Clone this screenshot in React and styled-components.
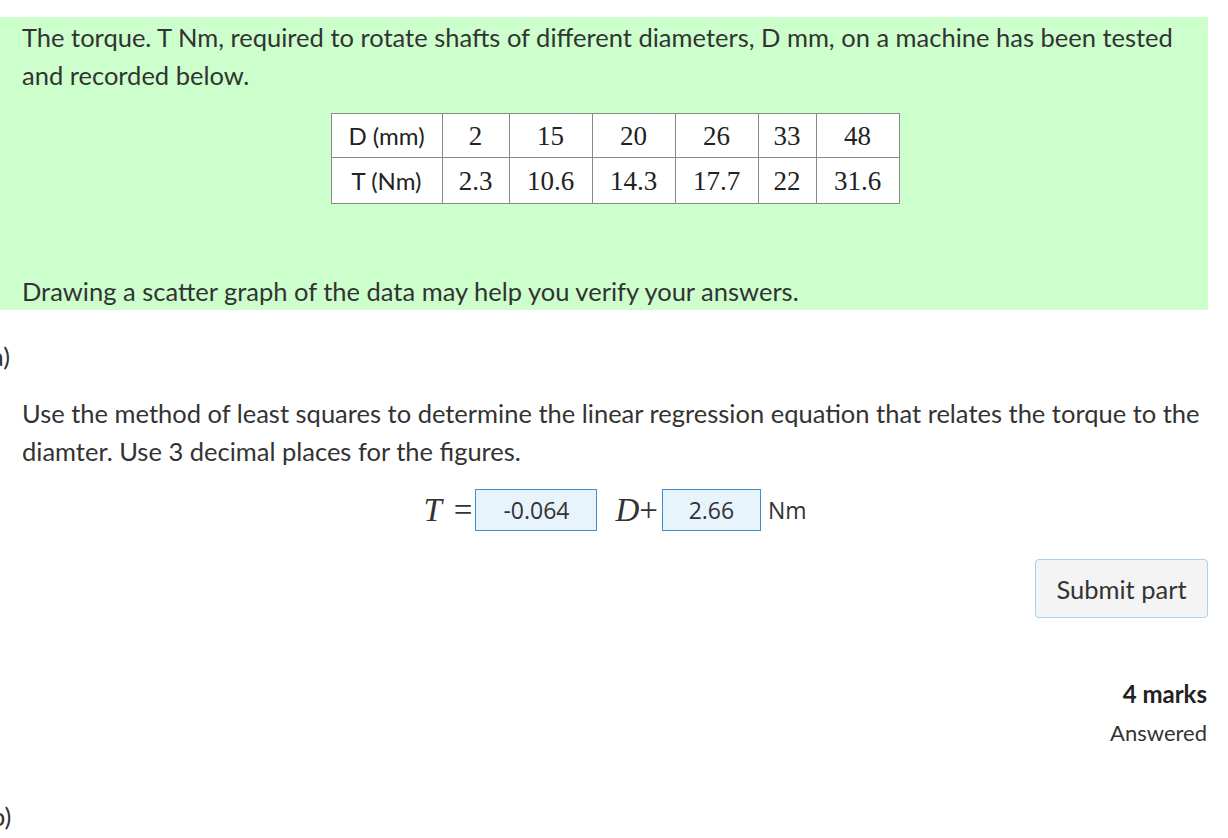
import React from 'react';
import styled, { createGlobalStyle } from 'styled-components';

const GlobalStyle = createGlobalStyle`
  body {
    margin: 0;
    background: #fff;
    color: #333;
    font-family: Lato, "Noto Sans", sans-serif;
    overflow: hidden;
  }
`;

const Page = styled.div`
  padding: 17px 20px 0 0;
  font-size: 25.5px;
  line-height: 38px;
`;

const Prompt = styled.div`
  background: #ccffcc;
  padding: 0 0 0 22px;
`;

const Para = styled.p`
  margin: 0;
  padding-top: ${(p) => p.$top || 0}px;
`;

const DataTable = styled.table`
  border-collapse: collapse;
  margin: 19px auto 68px;
  background: #fff;
`;

const Cell = styled.td`
  border: 1px solid #888;
  text-align: center;
  padding: 0;
  width: ${(p) => p.$w}px;
  height: ${(p) => p.$h}px;
  font-family: ${(p) => (p.$head ? 'Lato, "Noto Sans", sans-serif' : '"Liberation Serif", "DejaVu Serif", serif')};
  font-size: ${(p) => (p.$head ? 24 : 27)}px;
  color: #222;
`;

const Part = styled.div`
  margin-top: 27px;
`;

const PartLabel = styled.div`
  margin-left: -9px;
  height: 38px;
`;

const PartBody = styled.div`
  padding: 19px 0 0 22px;
`;

const Equation = styled.div`
  display: flex;
  justify-content: center;
  align-items: center;
  margin-top: 19px;
  height: 42px;
`;

const MathVar = styled.span`
  font-family: "Liberation Serif", "DejaVu Serif", serif;
  font-style: italic;
  font-size: 33px;
  margin: ${(p) => p.$m || '0'};
`;

const MathOp = styled.span`
  font-family: "Liberation Serif", "DejaVu Serif", serif;
  font-size: 33px;
  margin: ${(p) => p.$m || '0'};
`;

const AnswerBox = styled.span`
  box-sizing: border-box;
  display: inline-flex;
  align-items: center;
  justify-content: center;
  width: ${(p) => p.$w}px;
  height: 42px;
  background: #e8f4fc;
  border: 1px solid #3d8fd1;
  font-family: "Open Sans", "Noto Sans", sans-serif;
  font-size: 23px;
  color: #333;
`;

const Unit = styled.span`
  font-family: "Open Sans", "Noto Sans", sans-serif;
  font-size: 23px;
  margin-left: 7px;
`;

const Actions = styled.div`
  display: flex;
  justify-content: flex-end;
  margin-top: 28px;
`;

const SubmitButton = styled.button`
  box-sizing: border-box;
  width: 173px;
  height: 59px;
  background: #f4f4f4;
  border: 1px solid #a9d0ec;
  border-radius: 4px;
  font-family: Lato, "Noto Sans", sans-serif;
  font-size: 25.5px;
  color: #333;
`;

const Marks = styled.div`
  text-align: right;
  margin-top: 56px;
  font-size: 24px;
  line-height: 39px;
  padding-right: 1px;
`;

const MarkValue = styled.div`
  font-weight: 700;
  color: #222;
`;

const Status = styled.div`
  font-size: 22px;
`;

const NextLabel = styled.div`
  margin: 45px 0 0 -9px;
`;

const dRow = ['2', '15', '20', '26', '33', '48'];
const tRow = ['2.3', '10.6', '14.3', '17.7', '22', '31.6'];
const widths = [66, 82, 82, 82, 57, 82];

export default function App() {
  return (
    <>
      <GlobalStyle />
      <Page>
        <Prompt>
          <Para $top={1}>
            The torque. T Nm, required to rotate shafts of different diameters, D mm, on a machine has been tested
            and recorded below.
          </Para>
          <DataTable>
            <tbody>
              <tr>
                <Cell $head $w={110} $h={43}>D (mm)</Cell>
                {dRow.map((v, i) => (
                  <Cell key={v} $w={widths[i]} $h={43}>{v}</Cell>
                ))}
              </tr>
              <tr>
                <Cell $head $w={110} $h={45}>T (Nm)</Cell>
                {tRow.map((v, i) => (
                  <Cell key={v} $w={widths[i]} $h={45}>{v}</Cell>
                ))}
              </tr>
            </tbody>
          </DataTable>
          <Para>Drawing a scatter graph of the data may help you verify your answers.</Para>
        </Prompt>

        <Part>
          <PartLabel>a)</PartLabel>
          <PartBody>
            <Para>
              Use the method of least squares to determine the linear regression equation that relates the torque to the
              diamter. Use 3 decimal places for the figures.
            </Para>
            <Equation>
              <MathVar>T</MathVar>
              <MathOp $m="0 3px 0 12px">=</MathOp>
              <AnswerBox $w={122}>-0.064</AnswerBox>
              <MathVar $m="0 0 0 18px">D</MathVar>
              <MathOp $m="0 4px 0 0">+</MathOp>
              <AnswerBox $w={99}>2.66</AnswerBox>
              <Unit>Nm</Unit>
            </Equation>
            <Actions>
              <SubmitButton>Submit part</SubmitButton>
            </Actions>
            <Marks>
              <MarkValue>4 marks</MarkValue>
              <Status>Answered</Status>
            </Marks>
          </PartBody>
          <NextLabel>b)</NextLabel>
        </Part>
      </Page>
    </>
  );
}
